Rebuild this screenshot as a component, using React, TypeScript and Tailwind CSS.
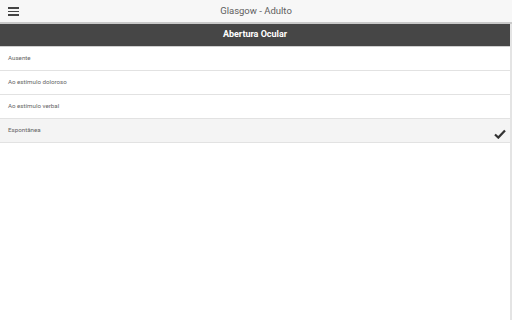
import React from "react";

const items = [
  { label: "Ausente", selected: false },
  { label: "Ao estímulo doloroso", selected: false },
  { label: "Ao estímulo verbal", selected: false },
  { label: "Espontânea", selected: true },
];

export default function App() {
  return (
    <div
      className="w-[512px] h-[320px] bg-white flex flex-col overflow-hidden"
      style={{ fontFamily: "Roboto, 'Liberation Sans', sans-serif" }}
    >
      <div className="h-[24px] shrink-0 bg-[#f7f7f7] border-b-2 border-[#c9c9c9] flex items-center relative">
        <div className="pl-[8px] pt-[1px] flex flex-col gap-[2px]">
          <div className="w-[11px] h-[1.5px] bg-[#444]" />
          <div className="w-[11px] h-[1.5px] bg-[#444]" />
          <div className="w-[11px] h-[1.5px] bg-[#444]" />
        </div>
        <div className="absolute inset-0 flex items-center justify-center text-[9.5px] text-[#606060]">
          Glasgow - Adulto
        </div>
      </div>
      <div className="flex-1 flex flex-col border-r-2 border-[#e4e4e4]">
        <div className="h-[23px] shrink-0 bg-[#464646] border-b border-[#cfcfcf] flex items-center justify-center text-white font-bold text-[9px]">
          Abertura Ocular
        </div>
        {items.map((it) => (
          <div
            key={it.label}
            className={`h-[24px] shrink-0 border-b border-[#e2e2e2] flex items-center justify-between pl-[8px] pr-[4px] text-[6.2px] text-[#666] ${
              it.selected ? "bg-[#f4f4f4]" : "bg-white"
            }`}
          >
            <span>{it.label}</span>
            {it.selected && (
              <svg width="12" height="10" viewBox="0 0 12 10" className="mt-[6px]">
                <path d="M1 5.5 L4.3 8.6 L11 1.4" stroke="#333" strokeWidth="2.2" fill="none" />
              </svg>
            )}
          </div>
        ))}
      </div>
    </div>
  );
}
